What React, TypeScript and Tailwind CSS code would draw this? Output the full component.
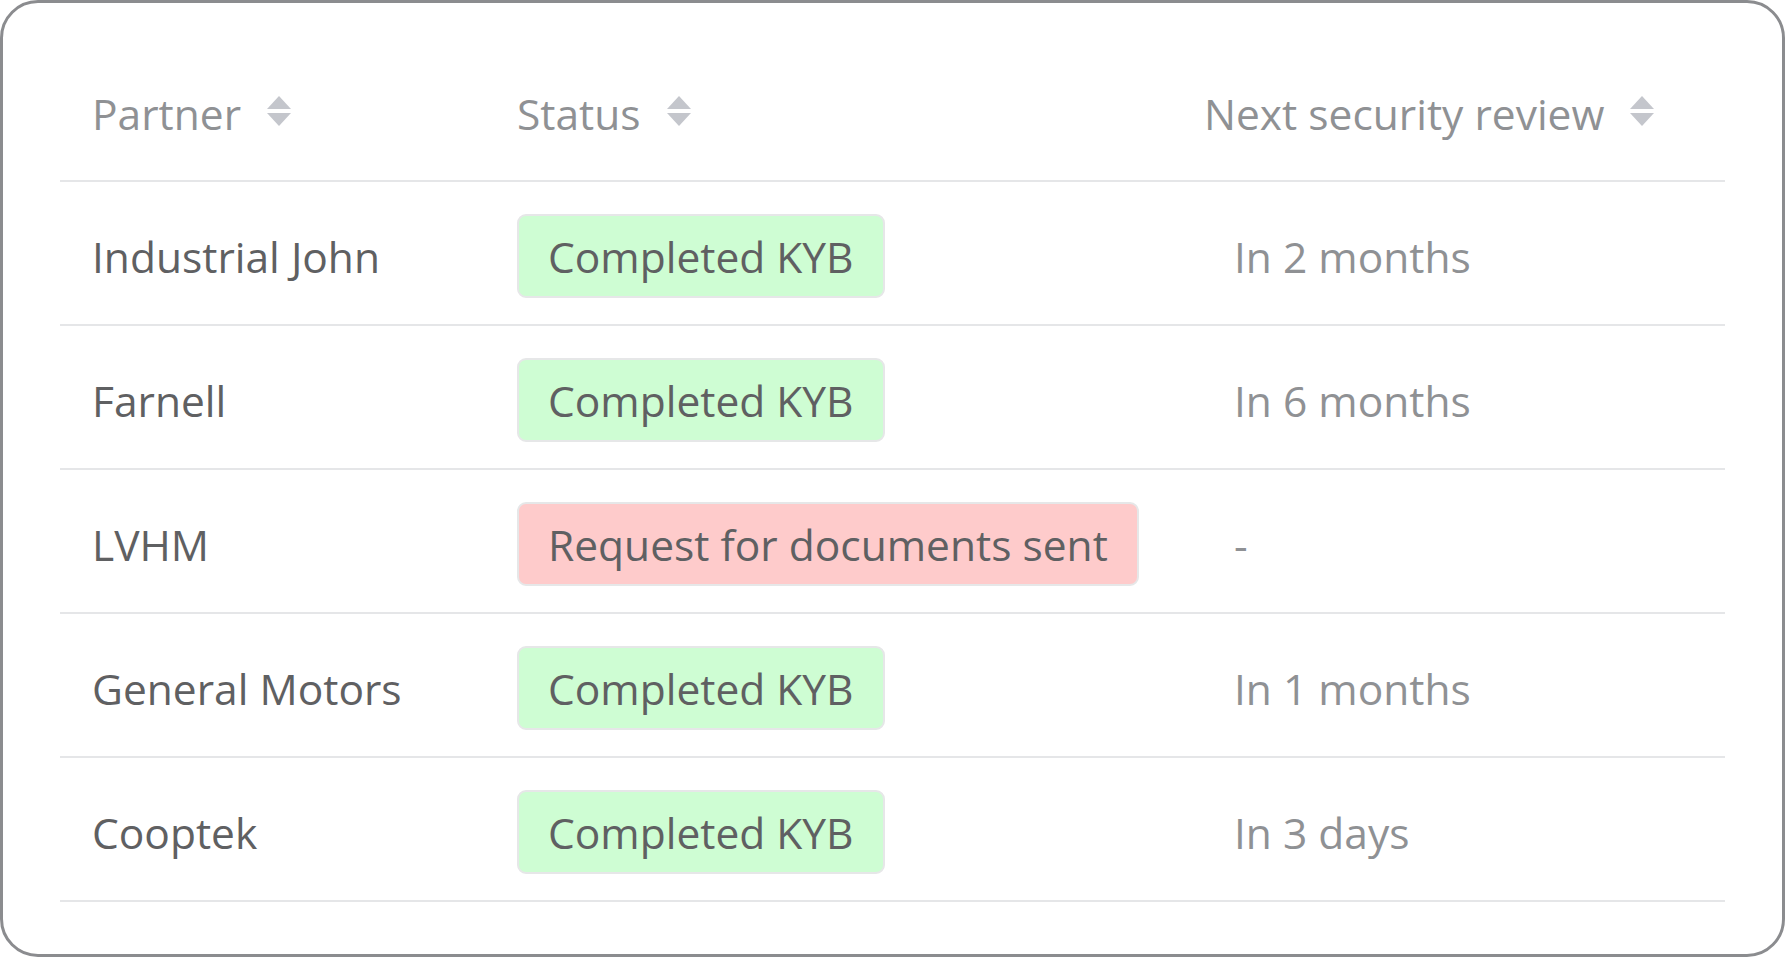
import React from "react";

type Row = {
  partner: string;
  status: string;
  ok: boolean;
  review: string;
};

const rows: Row[] = [
  { partner: "Industrial John", status: "Completed KYB", ok: true, review: "In 2 months" },
  { partner: "Farnell", status: "Completed KYB", ok: true, review: "In 6 months" },
  { partner: "LVHM", status: "Request for documents sent", ok: false, review: "-" },
  { partner: "General Motors", status: "Completed KYB", ok: true, review: "In 1 months" },
  { partner: "Cooptek", status: "Completed KYB", ok: true, review: "In 3 days" },
];

const SortIcon = () => (
  <svg width="24" height="30" viewBox="0 0 24 30" className="shrink-0 -translate-y-[3px]">
    <polygon points="0,13 12,0 24,13" fill="#c4c6cc" />
    <polygon points="0,17 24,17 12,30" fill="#c4c6cc" />
  </svg>
);

const HeaderCell = ({ label }: { label: string }) => (
  <div className="flex items-center gap-[26px]">
    <span>{label}</span>
    <SortIcon />
  </div>
);

export default function App() {
  return (
    <div className="min-h-screen bg-white" style={{ fontFamily: "'Open Sans', 'Noto Sans', sans-serif" }}>
      <div className="h-[957px] w-[1785px] rounded-[38px] border-[3px] border-[#8b8c8f] bg-white px-[57px] pt-[45px]">
        {/* header */}
        <div className="grid h-[134px] grid-cols-[425px_687px_1fr] items-center border-b-2 border-[#e5e6e8] pl-[32px] text-[42.5px] text-[#8f9194]">
          <HeaderCell label="Partner" />
          <HeaderCell label="Status" />
          <HeaderCell label="Next security review" />
        </div>

        {rows.map((r) => (
          <div
            key={r.partner}
            className="grid h-[144px] grid-cols-[425px_687px_1fr] items-center border-b-2 border-[#e5e6e8] pl-[32px] pt-[5px] text-[42.5px]"
          >
            <div className="translate-y-[1px] text-[#5f6062]">{r.partner}</div>
            <div>
              <span
                className={
                  r.ok
                    ? "inline-flex h-[84px] items-center rounded-[9px] border-2 border-[#e6e7e8] bg-[#cefdd3] px-[29px] pt-[2px] text-[#5f6062]"
                    : "inline-flex h-[84px] items-center rounded-[9px] border-2 border-[#e6e7e8] bg-[#fecbcb] px-[29px] pt-[2px] text-[#5f6062]"
                }
              >
                {r.status}
              </span>
            </div>
            <div className="translate-y-[1px] px-[30px] text-[#8f9194]">{r.review}</div>
          </div>
        ))}
      </div>
    </div>
  );
}
